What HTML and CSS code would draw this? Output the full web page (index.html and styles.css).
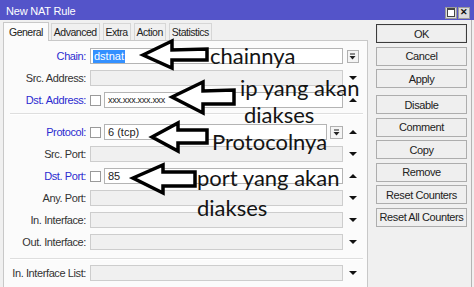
FILE: index.html
```html
<!DOCTYPE html>
<html>
<head>
<meta charset="utf-8">
<link rel="stylesheet" href="styles.css">
</head>
<body>
<div class="window">
  <div class="titlebar">
    <span class="title">New NAT Rule</span>
    <div class="tb-btns">
      <span class="tb-btn"><span class="sq"></span></span>
      <span class="tb-btn close">✕</span>
    </div>
  </div>
  <div class="main">
    <div class="left">
      <div class="tabs">
        <div class="tab active">General</div>
        <div class="tab">Advanced</div>
        <div class="tab">Extra</div>
        <div class="tab">Action</div>
        <div class="tab">Statistics</div>
      </div>
      <div class="panel">
        <div class="group">
          <div class="row">
            <span class="lbl blue">Chain:</span>
            <div class="field white"><span class="sel">dstnat</span></div>
            <span class="ctl"><span class="ddbox"><svg width="9" height="9" viewBox="0 0 9 9"><path d="M2 2h5" stroke="#222" stroke-width="1"/><path d="M1.5 4h6l-3 3.5z" fill="#222"/></svg></span></span>
          </div>
          <div class="row">
            <span class="lbl">Src. Address:</span>
            <div class="field"></div>
            <span class="ctl"><span class="tri down"></span></span>
          </div>
          <div class="row">
            <span class="lbl blue">Dst. Address:</span>
            <span class="chk"></span>
            <div class="field white"><span class="val small">xxx.xxx.xxx.xxx</span></div>
            <span class="ctl"><span class="tri up"></span></span>
          </div>
        </div>
        <div class="sep sep1"></div>
        <div class="group">
          <div class="row">
            <span class="lbl blue">Protocol:</span>
            <span class="chk"></span>
            <div class="field white"><span class="val">6 (tcp)</span></div>
            <span class="ddbox inrow"><svg width="9" height="9" viewBox="0 0 9 9"><path d="M2 2h5" stroke="#222" stroke-width="1"/><path d="M1.5 4h6l-3 3.5z" fill="#222"/></svg></span>
            <span class="ctl"><span class="tri up"></span></span>
          </div>
          <div class="row">
            <span class="lbl">Src. Port:</span>
            <div class="field"></div>
            <span class="ctl"><span class="tri down"></span></span>
          </div>
          <div class="row">
            <span class="lbl blue">Dst. Port:</span>
            <span class="chk"></span>
            <div class="field white"><span class="val">85</span></div>
            <span class="ctl"><span class="tri up"></span></span>
          </div>
          <div class="row">
            <span class="lbl">Any. Port:</span>
            <div class="field"></div>
            <span class="ctl"><span class="tri down"></span></span>
          </div>
          <div class="row">
            <span class="lbl">In. Interface:</span>
            <div class="field"></div>
            <span class="ctl"><span class="tri down"></span></span>
          </div>
          <div class="row">
            <span class="lbl">Out. Interface:</span>
            <div class="field"></div>
            <span class="ctl"><span class="tri down"></span></span>
          </div>
        </div>
        <div class="sep sep2"></div>
        <div class="group">
          <div class="row">
            <span class="lbl">In. Interface List:</span>
            <div class="field"></div>
            <span class="ctl"><span class="tri down"></span></span>
          </div>
        </div>
      </div>
    </div>
    <div class="right">
      <div class="btn-group">
        <div class="btn default">OK</div>
        <div class="btn">Cancel</div>
        <div class="btn">Apply</div>
      </div>
      <div class="btn-group">
        <div class="btn">Disable</div>
        <div class="btn">Comment</div>
        <div class="btn">Copy</div>
        <div class="btn">Remove</div>
        <div class="btn">Reset Counters</div>
        <div class="btn">Reset All Counters</div>
      </div>
    </div>
  </div>
</div>

<svg class="overlay" width="474" height="287" viewBox="0 0 474 287">
  <g fill="#fff" stroke="#000" stroke-width="3.5" stroke-linejoin="miter">
    <polygon points="143,55 172,41 172,50 207,49 207,60 172,60 172,68"/>
    <polygon points="172,97 203,82 203,91 234,90 234,104 203,104 203,113"/>
    <polygon points="152,137 178,123 178,130 207,130 207,143 178,143 178,151"/>
    <polygon points="133,178 163,165 163,172 195,172 195,186 163,186 163,193"/>
  </g>
</svg>

<div class="note n1">chainnya</div>
<div class="note n2">ip yang akan</div>
<div class="note n3">diakses</div>
<div class="note n4">Protocolnya</div>
<div class="note n5">port yang akan</div>
<div class="note n6">diakses</div>
</body>
</html>
```

FILE: styles.css
```css
html, body {
  margin: 0;
  padding: 0;
}
body {
  width: 474px;
  height: 287px;
  overflow: hidden;
  position: relative;
  background: #f0f0f0;
  font-family: "Liberation Sans", Arial, sans-serif;
  font-size: 11px;
  color: #222;
}
.window {
  width: 474px;
  height: 287px;
  display: flex;
  flex-direction: column;
}
.titlebar {
  height: 20px;
  flex: none;
  background: #5454c9;
  display: flex;
  align-items: center;
  justify-content: space-between;
  padding: 0 4px 0 6px;
  color: #fff;
}
.title {
  font-size: 11px;
  letter-spacing: -0.2px;
  margin-top: 2px;
}
.tb-btns {
  display: flex;
  gap: 1px;
  margin-top: 5px;
}
.tb-btn {
  width: 12px;
  height: 12px;
  box-sizing: border-box;
  background: #dcdcdc;
  border: 1px solid #9a9a9a;
  display: flex;
  align-items: center;
  justify-content: center;
  color: #111;
  font-size: 9px;
  font-weight: bold;
  line-height: 1;
}
.tb-btn .sq {
  width: 6px;
  height: 6px;
  border: 1px solid #444;
  border-top-width: 2px;
  background: #fff;
}
.main {
  flex: 1;
  display: flex;
  min-height: 0;
}
.left {
  width: 365px;
  margin-left: 3px;
  display: flex;
  flex-direction: column;
}
.tabs {
  display: flex;
  height: 18px;
  margin-top: 2px;
  align-items: flex-end;
}
.tab {
  height: 17px;
  box-sizing: border-box;
  padding: 0 2px;
  border: 1px solid #d6d6d6;
  border-bottom: none;
  background: #f0f0f0;
  margin-right: 3px;
  display: flex;
  align-items: center;
  color: #222;
  font-size: 10.5px;
  letter-spacing: -0.5px;
}
.tab.active {
  height: 19px;
  background: #fbfbfb;
  border-color: #c8c8c8;
  margin-bottom: -1px;
  margin-right: 2px;
  position: relative;
  z-index: 1;
  padding: 0 5px;
}
.panel {
  flex: 1;
  border: 1px solid #c8c8c8;
  border-bottom: none;
  background: #fbfbfb;
  padding-top: 7px;
}
.group {
  display: flex;
  flex-direction: column;
  gap: 6px;
}
.row {
  display: flex;
  align-items: center;
  height: 16px;
}
.lbl {
  width: 82px;
  margin-right: 4px;
  text-align: right;
  color: #333;
  letter-spacing: -0.4px;
  white-space: nowrap;
}
.lbl.blue {
  color: #2b2bd0;
}
.field {
  flex: 1;
  height: 16px;
  box-sizing: border-box;
  border: 1px solid #cdcdcd;
  background: #f0f0f0;
  display: flex;
  align-items: center;
  padding-left: 2px;
}
.field.white {
  background: #fff;
  border-color: #b4b4b4;
}
.sel {
  background: #3390ff;
  color: #fff;
  padding: 0 1px;
  line-height: 13px;
}
.val {
  color: #222;
  padding-left: 1px;
}
.val.small {
  font-size: 9px;
  letter-spacing: -0.3px;
}
.chk {
  width: 11px;
  height: 11px;
  box-sizing: border-box;
  border: 1px solid #9a9a9a;
  background: #fff;
  margin-right: 3px;
  flex: none;
}
.ctl {
  width: 17px;
  margin-right: 7px;
  flex: none;
  display: flex;
  justify-content: center;
  align-items: center;
}
.ddbox {
  width: 12px;
  height: 13px;
  box-sizing: border-box;
  border: 1px solid #b0b0b0;
  background: #f4f4f4;
  display: flex;
  align-items: center;
  justify-content: center;
  margin-left: 2px;
}
.ddbox.inrow {
  width: 13px;
  margin-left: 3px;
}
.tri {
  width: 0;
  height: 0;
  border-left: 4px solid transparent;
  border-right: 4px solid transparent;
}
.tri.down {
  border-top: 4px solid #111;
  margin-left: 2px;
}
.tri.up {
  border-bottom: 4px solid #111;
  margin-left: 2px;
}
.sep {
  height: 0;
  border-top: 1px solid #dedede;
  border-bottom: 1px solid #fff;
  margin: 0 4px 0 6px;
}
.sep1 {
  margin-top: 5px;
  margin-bottom: 9px;
}
.sep2 {
  margin-top: 8px;
  margin-bottom: 5px;
}
.right {
  width: 104px;
  box-sizing: border-box;
  border-right: 1px solid #b4b4b4;
  padding: 4px 0 0 8px;
  display: flex;
  flex-direction: column;
  gap: 7px;
}
.btn-group {
  display: flex;
  flex-direction: column;
  gap: 3.5px;
}
.btn {
  width: 91px;
  height: 19px;
  box-sizing: border-box;
  border: 1px solid #adadad;
  background: #efefef;
  display: flex;
  align-items: center;
  justify-content: center;
  color: #222;
  letter-spacing: -0.4px;
}
.btn.default {
  border: 1px solid #3c3c3c;
  box-shadow: inset 0 0 0 1px #e4e4e4;
}
.overlay {
  position: absolute;
  left: 0;
  top: 0;
  pointer-events: none;
}
.note {
  position: absolute;
  font-family: Lato, "Open Sans", sans-serif;
  font-size: 22px;
  line-height: 1;
  color: #141414;
  white-space: nowrap;
}
.n1 { left: 210px; top: 45px; }
.n2 { left: 240px; top: 77px; }
.n3 { left: 244px; top: 104px; }
.n4 { left: 212px; top: 131px; }
.n5 { left: 197px; top: 167px; }
.n6 { left: 197px; top: 197px; }
```
